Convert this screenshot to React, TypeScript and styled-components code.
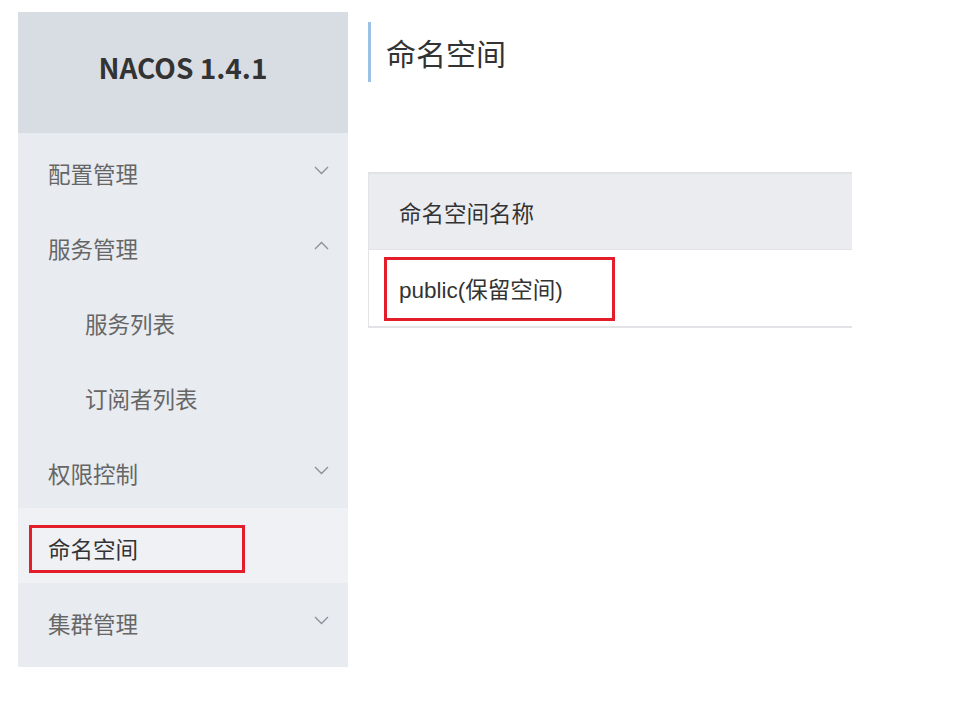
import React from "react";
import styled, { createGlobalStyle } from "styled-components";

const Global = createGlobalStyle`
  html, body { margin: 0; padding: 0; background: #fff; }
  body { font-family: "Liberation Sans", "Noto Sans CJK SC", sans-serif; }
`;

const Page = styled.div`
  display: flex;
  align-items: flex-start;
  gap: 20px;
  padding: 12px 0 0 18px;
  width: 968px;
  height: 718px;
  box-sizing: border-box;
`;

const Sidebar = styled.nav`
  width: 330px;
  height: 655px;
  background: #e8ebf0;
  display: flex;
  flex-direction: column;
`;

const Brand = styled.div`
  height: 121px;
  background: #d8dce3;
  display: flex;
  align-items: center;
  justify-content: center;
  font-family: "Noto Sans CJK SC", "Noto Sans", sans-serif;
  font-weight: 700;
  font-size: 28px;
  color: #333;
  padding-bottom: 12px;
  box-sizing: border-box;
`;

const Item = styled.div<{ $sub?: boolean; $active?: boolean }>`
  position: relative;
  height: 75px;
  display: flex;
  align-items: center;
  justify-content: space-between;
  padding: 4px 19px 0 ${(p) => (p.$sub ? 67 : 30)}px;
  box-sizing: border-box;
  background: ${(p) => (p.$active ? "#eff1f5" : "transparent")};
  font-size: 22.5px;
  color: ${(p) => (p.$active ? "#333" : "#666")};
`;

const Highlight = styled.div<{ $l: number; $t: number; $w: number; $h: number }>`
  position: absolute;
  left: ${(p) => p.$l}px;
  top: ${(p) => p.$t}px;
  width: ${(p) => p.$w}px;
  height: ${(p) => p.$h}px;
  border: 3px solid #e31e2a;
  box-sizing: border-box;
  pointer-events: none;
`;

const Chevron = ({ up }: { up?: boolean }) => (
  <svg width="15" height="9" viewBox="0 0 15 9" style={{ marginTop: -4 }}>
    <polyline
      points={up ? "1,8 7.5,1.5 14,8" : "1,1 7.5,7.5 14,1"}
      fill="none"
      stroke="#8a8f99"
      strokeWidth="1.3"
    />
  </svg>
);

const Main = styled.main`
  display: flex;
  flex-direction: column;
  padding-top: 10px;
`;

const Title = styled.h1`
  margin: 0;
  height: 60px;
  border-left: 3px solid #9cc1e6;
  padding-left: 15px;
  display: flex;
  align-items: center;
  font-size: 30px;
  font-weight: 400;
  color: #333;
`;

const Table = styled.div`
  margin-top: 90px;
  width: 484px;
  display: flex;
  flex-direction: column;
`;

const HeadRow = styled.div`
  height: 78px;
  background: #ebecf0;
  border-top: 2px solid #e2e3e7;
  border-left: 1px solid #e2e3e7;
  border-bottom: 1px solid #e2e3e7;
  box-sizing: border-box;
  display: flex;
  align-items: center;
  padding-left: 30px;
  font-size: 22.5px;
  color: #333;
`;

const BodyRow = styled.div`
  position: relative;
  height: 78px;
  border-left: 1px solid #e2e3e7;
  border-bottom: 2px solid #e2e3e7;
  box-sizing: border-box;
  display: flex;
  align-items: center;
  padding-left: 30px;
  font-size: 22.5px;
  color: #333;
`;

export default function App() {
  return (
    <>
      <Global />
      <Page>
        <Sidebar>
          <Brand>NACOS 1.4.1</Brand>
          <Item>
            配置管理
            <Chevron />
          </Item>
          <Item>
            服务管理
            <Chevron up />
          </Item>
          <Item $sub>服务列表</Item>
          <Item $sub>订阅者列表</Item>
          <Item>
            权限控制
            <Chevron />
          </Item>
          <Item $active>
            命名空间
            <Highlight $l={11} $t={17} $w={216} $h={48} />
          </Item>
          <Item>
            集群管理
            <Chevron />
          </Item>
        </Sidebar>
        <Main>
          <Title>命名空间</Title>
          <Table>
            <HeadRow>命名空间名称</HeadRow>
            <BodyRow>
              public(保留空间)
              <Highlight $l={15} $t={7} $w={231} $h={64} />
            </BodyRow>
          </Table>
        </Main>
      </Page>
    </>
  );
}
